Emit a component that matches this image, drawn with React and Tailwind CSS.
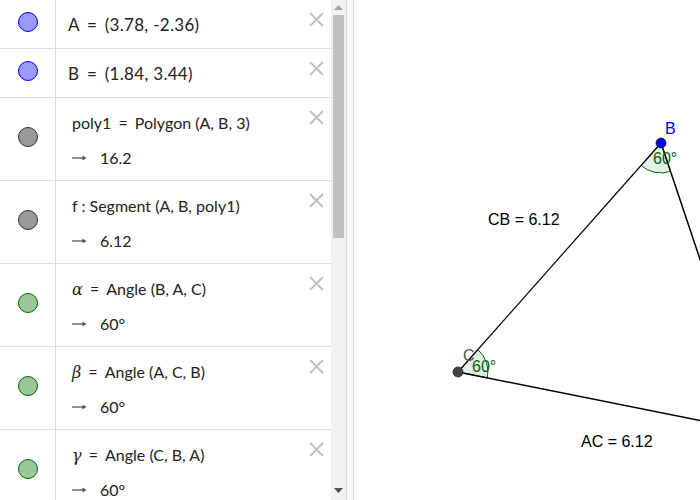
import React from "react";

const MATH = { fontFamily: "Lato, 'DejaVu Sans', sans-serif" };
const GREEK = { fontFamily: "'DejaVu Serif', 'Liberation Serif', serif" };

function Dot({ kind }) {
  const c =
    kind === "blue"
      ? "bg-[#9999ff] border-[#0000ff]"
      : kind === "gray"
      ? "bg-[#999999] border-[#333333]"
      : "bg-[#99c799] border-[#006400]";
  return <div className={`w-[20px] h-[20px] rounded-full border ${c}`} />;
}

function Close() {
  return (
    <svg width="15" height="15" viewBox="0 0 15 15" className="block">
      <path d="M1 1 L14 14 M14 1 L1 14" stroke="#c0c0c0" strokeWidth="1.8" fill="none" />
    </svg>
  );
}

function Arrow() {
  return (
    <svg width="15" height="8" viewBox="0 0 15 8" className="inline-block">
      <path d="M0 4 H13" stroke="#555" strokeWidth="1.3" />
      <path d="M10.5 1.6 L14.5 4 L10.5 6.4 Z" fill="#555" />
    </svg>
  );
}

function Eq() {
  return <span className="mx-[3px]">=</span>;
}

function Row({ kind, line1, value, h, x = "pl-[16px]", big }) {
  return (
    <div className={`flex border-b border-[#dddddd] shrink-0 ${h}`}>
      <div className="w-[56px] shrink-0 border-r border-[#dddddd] flex items-center justify-center pb-[5px]">
        <Dot kind={kind} />
      </div>
      <div
        className={`flex-1 pt-[15px] ${x} ${big ? "text-[17px] tracking-[0.3px]" : "text-[16px]"} text-[#222]`}
        style={MATH}
      >
        <div className="h-[20px] leading-[20px] whitespace-nowrap">{line1}</div>
        {value && (
          <div className="mt-[15px] h-[20px] leading-[20px] whitespace-nowrap flex items-center">
            <Arrow />
            <span className="ml-[13px]">{value}</span>
          </div>
        )}
      </div>
      <div className="w-[22px] shrink-0 pt-[12px]">
        <Close />
      </div>
    </div>
  );
}

function G({ c }) {
  return (
    <span className="italic" style={GREEK}>
      {c}
    </span>
  );
}

export default function App() {
  return (
    <div className="w-[700px] h-[500px] flex overflow-hidden bg-white">
      <div className="w-[331px] shrink-0 flex flex-col overflow-hidden">
        <Row kind="blue" h="h-[49px]" x="pl-[12px]" big line1={<>A <Eq /> (3.78, -2.36)</>} />
        <Row kind="blue" h="h-[49px]" x="pl-[12px]" big line1={<>B <Eq /> (1.84, 3.44)</>} />
        <Row kind="gray" h="h-[83px]" line1={<>poly1 <Eq /> Polygon (A, B, 3)</>} value="16.2" />
        <Row kind="gray" h="h-[83px]" line1={<>f : Segment (A, B, poly1)</>} value="6.12" />
        <Row kind="green" h="h-[83px]" line1={<><G c="α" /> <Eq /> Angle (B, A, C)</>} value="60°" />
        <Row kind="green" h="h-[83px]" line1={<><G c="β" /> <Eq /> Angle (A, C, B)</>} value="60°" />
        <Row kind="green" h="h-[83px]" line1={<><G c="γ" /> <Eq /> Angle (C, B, A)</>} value="60°" />
      </div>
      <div className="w-[15px] shrink-0 bg-[#f1f1f1] flex flex-col">
        <div className="h-[15px] flex items-center justify-center">
          <svg width="9" height="5" viewBox="0 0 9 5"><path d="M0 5 L4.5 0 L9 5 Z" fill="#a3a3a3" /></svg>
        </div>
        <div className="h-[223px] mx-[2px] bg-[#c1c1c1]" />
        <div className="flex-1" />
        <div className="h-[20px] flex items-center justify-center">
          <svg width="9" height="5" viewBox="0 0 9 5"><path d="M0 0 L9 0 L4.5 5 Z" fill="#505050" /></svg>
        </div>
      </div>
      <div className="w-[8px] shrink-0 bg-[#f8f8f8] border-l border-r border-[#dcdcdc]" />
      <div className="flex-1 relative">
        <svg width="346" height="500" viewBox="354 0 346 500" className="block">
          <path d="M458 372 L487.4 377.9 A30 30 0 0 0 477.9 349.55 Z" fill="rgba(0,100,0,0.1)" stroke="#006400" strokeWidth="1" />
          <path d="M661 143 L641.1 165.45 A30 30 0 0 0 670.5 171.4 Z" fill="rgba(0,100,0,0.1)" stroke="#006400" strokeWidth="1" />
          <line x1="458" y1="372" x2="661" y2="143" stroke="#000" strokeWidth="1.2" />
          <line x1="661" y1="143" x2="758" y2="432" stroke="#000" strokeWidth="1.5" />
          <line x1="458" y1="372" x2="758" y2="432" stroke="#000" strokeWidth="1.5" />
          <g style={{ fontFamily: "'Liberation Sans', Arial, sans-serif" }} fontSize="16">
            <text x="463" y="361" fill="#555">C</text>
            <text x="472" y="372" fill="#006400">60°</text>
            <text x="653" y="164" fill="#006400">60°</text>
            <text x="665" y="134" fill="#0000ff">B</text>
            <text x="488" y="225" fill="#000">CB = 6.12</text>
            <text x="581" y="447" fill="#000">AC = 6.12</text>
          </g>
          <circle cx="661" cy="143" r="5" fill="#0000ff" stroke="#222" strokeWidth="0.8" />
          <circle cx="458" cy="372" r="5" fill="#444" stroke="#222" strokeWidth="0.8" />
        </svg>
      </div>
    </div>
  );
}
